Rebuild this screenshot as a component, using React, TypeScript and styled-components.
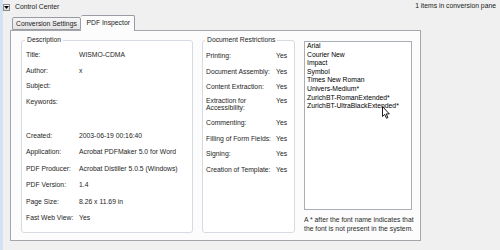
import React from "react";
import styled, { createGlobalStyle } from "styled-components";

const Global = createGlobalStyle`
  html, body { margin: 0; padding: 0; background: #f0f0f0; }
  body { font-family: "Liberation Sans", Arial, sans-serif; font-size: 6.8px; color: #1e1e1e; }
  * { box-sizing: border-box; }
`;

const Window = styled.div`
  width: 500px;
  height: 250px;
  border-left: 3px solid #d3e2f2;
  background: #f0f0f0;
  display: flex;
  flex-direction: column;
  overflow: hidden;
`;

const Header = styled.div`
  height: 14px;
  display: flex;
  align-items: center;
  padding-right: 4px;
`;

const DropButton = styled.div`
  width: 7px;
  height: 7px;
  border: 1px solid #8a8a8a;
  background: linear-gradient(#fafafa, #dcdcdc);
  display: flex;
  align-items: center;
  justify-content: center;
`;

const Caption = styled.span`
  margin-left: 5px;
  line-height: 8px;
  color: #1a1a1a;
`;

const Status = styled.span`
  margin-left: auto;
  align-self: flex-start;
  padding-top: 2px;
  line-height: 8px;
  color: #1a1a1a;
`;

const TabStrip = styled.div`
  height: 16px;
  padding: 1px 0 0 8.7px;
  display: flex;
  align-items: flex-end;
  position: relative;
  z-index: 2;
`;

const Tab = styled.div<{ $active?: boolean }>`
  height: ${(p) => (p.$active ? "16px" : "13px")};
  margin-bottom: ${(p) => (p.$active ? "-1px" : "0")};
  padding: ${(p) => (p.$active ? "0 4.5px 1px 5.7px" : "0 3px 0 3.3px")};
  display: flex;
  align-items: center;
  border: 1px solid #9a9ca3;
  border-bottom: ${(p) => (p.$active ? "none" : "1px solid #9a9ca3")};
  border-left: ${(p) => (p.$active ? "none" : "1px solid #9a9ca3")};
  border-radius: 2px 2px 0 0;
  background: ${(p) => (p.$active ? "#fcfcfc" : "linear-gradient(#f4f4f4, #e4e4e4)")};
  color: #1a1a1a;
  line-height: 8px;
  white-space: nowrap;
`;

const Panel = styled.div`
  margin-left: 7px;
  width: 411px;
  height: 211px;
  border: 1px solid #a4a6ab;
  background: #fcfcfc;
  padding: 5px 7px 7px 10px;
  display: grid;
  grid-template-columns: 172px 93px 108px;
  column-gap: 9px;
  position: relative;
  z-index: 1;
`;

const Group = styled.fieldset`
  margin: 0;
  padding: 0;
  min-width: 0;
  border: 1px solid #d5dbe1;
  border-radius: 3px;
  background: #ffffff;
`;

const Legend = styled.legend<{ $ml: number }>`
  margin-left: ${(p) => p.$ml}px;
  padding: 0 2px;
  line-height: 8px;
  color: #1e1e1e;
`;

const Rows = styled.div<{ $pt: number; $pl: number; $label: number }>`
  padding: ${(p) => p.$pt}px 0 0 ${(p) => p.$pl}px;
  display: grid;
  grid-template-columns: ${(p) => p.$label}px 1fr;
`;

const Cell = styled.div<{ $h: number; $multi?: boolean }>`
  height: ${(p) => p.$h}px;
  line-height: ${(p) => (p.$multi ? "6.7px" : `${p.$h}px`)};
  padding-top: ${(p) => (p.$multi ? "3.2px" : "0")};
  white-space: ${(p) => (p.$multi ? "normal" : "nowrap")};
  color: #1e1e1e;
`;

const InfoCell = styled.div<{ $h: number; $lh: number }>`
  height: ${(p) => p.$h}px;
  line-height: ${(p) => p.$lh}px;
  color: #1e1e1e;
  white-space: nowrap;
`;

const FontColumn = styled.div`
  display: flex;
  flex-direction: column;
  padding-top: 5px;
`;

const FontList = styled.div`
  height: 168.5px;
  border: 1px solid #a9aeb5;
  background: #ffffff;
  padding: 0 0 0 2px;
  position: relative;
`;

const FontItem = styled.div`
  line-height: 8.6px;
  color: #000;
  white-space: nowrap;
`;

const Note = styled.div`
  margin-top: 5.5px;
  line-height: 9px;
  color: #2a2a2a;
  width: 112px;
  white-space: nowrap;
`;

const Cursor = styled.svg`
  position: absolute;
  left: 77px;
  top: 63.5px;
`;

type Row = { label: string; value: string; h: number; multi?: boolean };

const description: Row[] = [
  { label: "Title:", value: "WISMO-CDMA", h: 15.5 },
  { label: "Author:", value: "x", h: 15.5 },
  { label: "Subject:", value: "", h: 15.5 },
  { label: "Keywords:", value: "", h: 34 },
  { label: "Created:", value: "2003-06-19 00:16:40", h: 16.5 },
  { label: "Application:", value: "Acrobat PDFMaker 5.0 for Word", h: 16.5 },
  { label: "PDF Producer:", value: "Acrobat Distiller 5.0.5 (Windows)", h: 16.5 },
  { label: "PDF Version:", value: "1.4", h: 16.5 },
  { label: "Page Size:", value: "8.26 x 11.69 in", h: 16.5 },
  { label: "Fast Web View:", value: "Yes", h: 16.5 },
];

const restrictions: Row[] = [
  { label: "Printing:", value: "Yes", h: 15.5 },
  { label: "Document Assembly:", value: "Yes", h: 15.5 },
  { label: "Content Extraction:", value: "Yes", h: 15.5 },
  { label: "Extraction for Accessibility:", value: "Yes", h: 20.5, multi: true },
  { label: "Commenting:", value: "Yes", h: 15.5 },
  { label: "Filling of Form Fields:", value: "Yes", h: 15.5 },
  { label: "Signing:", value: "Yes", h: 15.5 },
  { label: "Creation of Template:", value: "Yes", h: 15.5 },
];

const fonts = [
  "Arial",
  "Courier New",
  "Impact",
  "Symbol",
  "Times New Roman",
  "Univers-Medium*",
  "ZurichBT-RomanExtended*",
  "ZurichBT-UltraBlackExtended*",
];

export default function App() {
  return (
    <>
      <Global />
      <Window>
        <Header>
          <DropButton>
            <svg width="5" height="3" viewBox="0 0 5 3">
              <path d="M0 0 H5 L2.5 3 Z" fill="#000" />
            </svg>
          </DropButton>
          <Caption>Control Center</Caption>
          <Status>1 items in conversion pane</Status>
        </Header>
        <TabStrip>
          <Tab>Conversion Settings</Tab>
          <Tab $active>PDF Inspector</Tab>
        </TabStrip>
        <Panel>
          <Group>
            <Legend $ml={3}>Description</Legend>
            <Rows $pt={3.25} $pl={4} $label={53}>
              {description.map((r) => {
                const lh = Math.min(r.h, 16.5);
                return (
                  <React.Fragment key={r.label}>
                    <InfoCell $h={r.h} $lh={lh}>
                      {r.label}
                    </InfoCell>
                    <InfoCell $h={r.h} $lh={lh}>
                      {r.value}
                    </InfoCell>
                  </React.Fragment>
                );
              })}
            </Rows>
          </Group>
          <Group>
            <Legend $ml={2}>Document Restrictions</Legend>
            <Rows $pt={4.25} $pl={3} $label={70}>
              {restrictions.map((r) => (
                <React.Fragment key={r.label}>
                  <Cell $h={r.h} $multi={r.multi}>
                    {r.label}
                  </Cell>
                  <Cell $h={r.h} $multi={r.multi}>
                    {r.value}
                  </Cell>
                </React.Fragment>
              ))}
            </Rows>
          </Group>
          <FontColumn>
            <FontList>
              {fonts.map((f) => (
                <FontItem key={f}>{f}</FontItem>
              ))}
              <Cursor width="8" height="13" viewBox="0 0 8 13">
                <path
                  d="M0.5 0.5 L0.5 10.5 L2.8 8.4 L4.4 12.2 L5.9 11.6 L4.3 7.9 L7.3 7.9 Z"
                  fill="#fff"
                  stroke="#000"
                  strokeWidth="0.9"
                  strokeLinejoin="miter"
                />
              </Cursor>
            </FontList>
            <Note>
              A * after the font name indicates that
              <br />
              the font is not present in the system.
            </Note>
          </FontColumn>
        </Panel>
      </Window>
    </>
  );
}
